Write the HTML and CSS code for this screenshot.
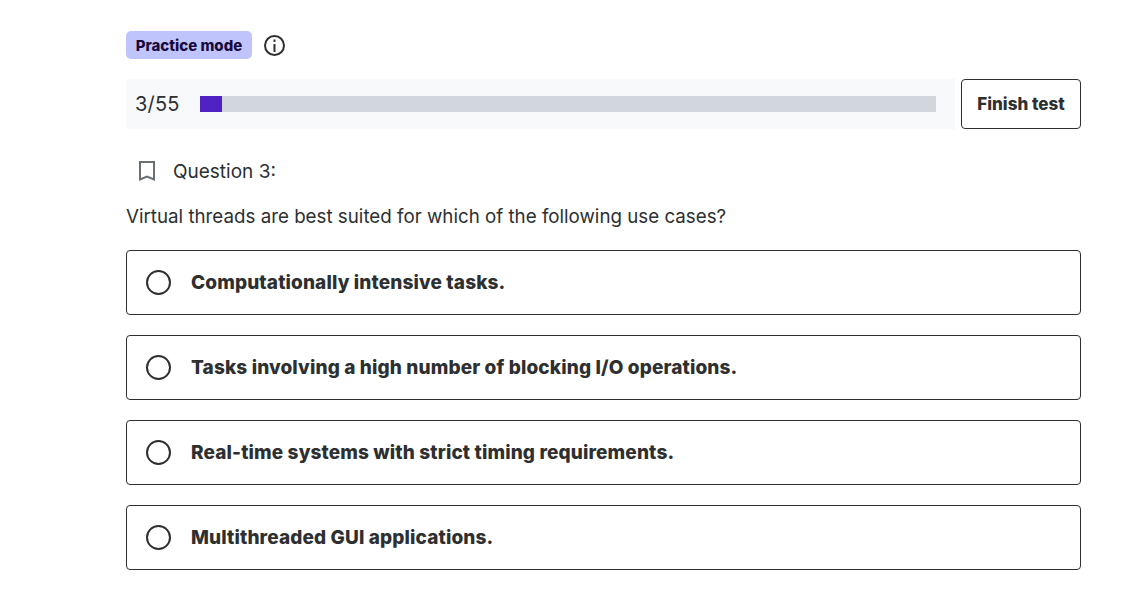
FILE: index.html
```html
<!DOCTYPE html>
<html lang="en">
<head>
    <meta charset="UTF-8">
    <meta name="viewport" content="width=device-width, initial-scale=1.0">
    <title>Practice test</title>
    <link rel="stylesheet" href="styles.css">
</head>
<body>
    <div class="quiz">
        <div class="mode-row">
            <span class="badge">Practice mode</span>
            <svg class="info-icon" width="24" height="24" viewBox="0 0 24 24" fill="none">
                <circle cx="12.5" cy="12.5" r="9.5" stroke="#2d2f31" stroke-width="2"/>
                <rect x="11.5" y="11" width="2" height="8" fill="#2d2f31"/>
                <rect x="11.5" y="6.5" width="2" height="2.4" fill="#2d2f31"/>
            </svg>
        </div>

        <div class="progress-row">
            <div class="progress-box">
                <span class="count">3/55</span>
                <div class="track"><div class="fill" style="width: 3%"></div></div>
            </div>
            <button class="finish" type="button">Finish test</button>
        </div>

        <div class="question-head">
            <svg width="24" height="24" viewBox="0 0 24 24" fill="none">
                <path d="M5 3h14v17.5l-7-3-7 3z" stroke="#6a6f73" stroke-width="2"/>
            </svg>
            <span>Question 3:</span>
        </div>

        <p class="question">Virtual threads are best suited for which of the following use cases?</p>

        <div class="options">
            <label class="option"><span class="radio"></span><span>Computationally intensive tasks.</span></label>
            <label class="option"><span class="radio"></span><span>Tasks involving a high number of blocking I/O operations.</span></label>
            <label class="option"><span class="radio"></span><span>Real-time systems with strict timing requirements.</span></label>
            <label class="option"><span class="radio"></span><span>Multithreaded GUI applications.</span></label>
        </div>
    </div>
</body>
</html>
```

FILE: styles.css
```css
* {
    box-sizing: border-box;
}
body {
    margin: 0;
    background: white;
    color: #2d2f31;
    font-family: Inter, "Noto Sans", sans-serif;
}
.quiz {
    width: 955px;
    margin-left: 126px;
    padding-top: 31px;
}
.mode-row {
    display: flex;
    align-items: center;
    gap: 10px;
    height: 28px;
}
.badge {
    display: flex;
    align-items: center;
    justify-content: center;
    width: 126px;
    height: 28px;
    background: #c0c4fc;
    color: #180a3d;
    border-radius: 5px;
    font-size: 15px;
    font-weight: 800;
}
.progress-row {
    display: flex;
    gap: 6px;
    margin-top: 20px;
}
.progress-box {
    flex: 1;
    display: flex;
    align-items: center;
    height: 50px;
    padding: 0 19px 0 9px;
    background: #f7f9fa;
}
.count {
    width: 65px;
    font-size: 20px;
    letter-spacing: 0.2px;
}
.track {
    flex: 1;
    height: 16px;
    background: #d1d7dc;
}
.fill {
    height: 100%;
    background: #5022c3;
}
.finish {
    width: 120px;
    height: 50px;
    padding: 0;
    background: white;
    color: #2d2f31;
    border: 1px solid #2d2f31;
    border-radius: 4px;
    font-family: inherit;
    font-size: 17px;
    font-weight: 800;
}
.question-head {
    display: flex;
    align-items: center;
    gap: 14px;
    height: 24px;
    margin-top: 30px;
    padding-left: 9px;
    font-size: 19px;
}
.question {
    margin: 22px 0 0;
    font-size: 18.75px;
    line-height: 24px;
}
.options {
    display: flex;
    flex-direction: column;
    gap: 20px;
    margin-top: 21px;
}
.option {
    display: flex;
    align-items: center;
    gap: 20px;
    height: 65px;
    padding-left: 19px;
    border: 1px solid #2d2f31;
    border-radius: 4px;
    font-size: 19px;
    font-weight: 800;
    letter-spacing: 0.13px;
}
.radio {
    width: 25px;
    height: 25px;
    border: 2px solid #2d2f31;
    border-radius: 50%;
}
```
